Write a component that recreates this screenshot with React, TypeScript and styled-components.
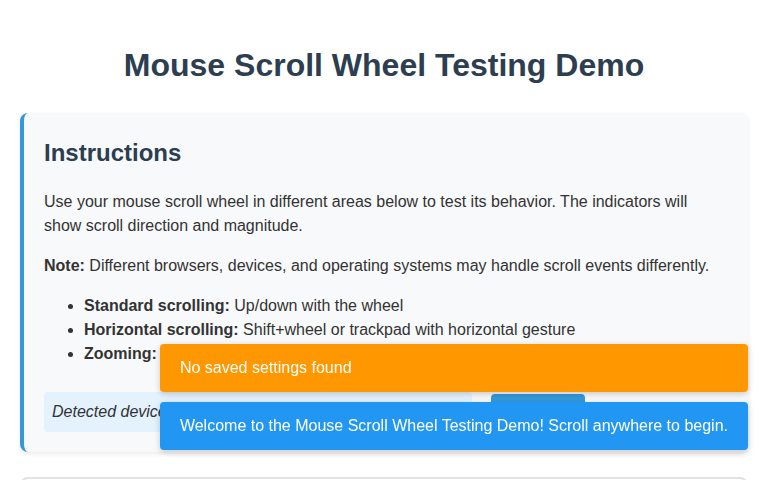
import React from "react";
import styled, { createGlobalStyle } from "styled-components";

const GlobalStyle = createGlobalStyle`
    * {
        box-sizing: border-box;
    }
    body {
        margin: 0;
        font-family: "Liberation Sans", Arial, sans-serif;
        line-height: 1.5;
        color: #333;
        background: #fff;
    }
`;

const Container = styled.div`
    max-width: 1200px;
    margin: 0 auto;
    padding: 20px;
`;

const Title = styled.h1`
    font-size: 32px;
    line-height: 1.2;
    color: #2c3e50;
    text-align: center;
    margin: 26px 0 29px;
`;

const Card = styled.section<{ $accent?: boolean }>`
    background: ${(p) => (p.$accent ? "#f8f9fa" : "#fff")};
    border: ${(p) => (p.$accent ? "none" : "2px solid #e2e2e2")};
    border-left: ${(p) => (p.$accent ? "4px solid #3498db" : "2px solid #e2e2e2")};
    border-radius: 8px;
    padding: 20px;
    margin-bottom: 25px;
    box-shadow: ${(p) => (p.$accent ? "0 2px 5px rgba(0, 0, 0, 0.08)" : "none")};
`;

const CardTitle = styled.h2`
    font-size: 24px;
    line-height: 1.5;
    color: #2c3e50;
    margin: 2px 0 19px;
`;

const Para = styled.p`
    margin: 0 0 16px;
    font-size: 16px;
    max-width: 680px;
`;

const List = styled.ul`
    margin: 0 0 16px;
    padding-left: 40px;
`;

const DeviceRow = styled.div`
    display: flex;
    align-items: center;
    gap: 19px;
    margin-top: 26px;
`;

const DeviceInfo = styled.div`
    width: 428px;
    background: #e3f2fd;
    padding: 8px;
    font-style: italic;
    border-radius: 4px;
    white-space: nowrap;
    overflow: hidden;
`;

const Button = styled.button`
    background: #3498db;
    color: #fff;
    border: none;
    border-radius: 4px;
    padding: 8px 19px;
    font-family: "Liberation Sans", Arial, sans-serif;
    font-size: 14px;
    line-height: 20px;
    cursor: pointer;
`;

const TestArea = styled.div`
    height: 200px;
    background: #fafafa;
    border-radius: 4px;
`;

const ToastStack = styled.div`
    position: fixed;
    right: 20px;
    bottom: 20px;
    display: flex;
    flex-direction: column;
    z-index: 1000;
`;

const Toast = styled.div<{ $kind: "warning" | "info" }>`
    background: ${(p) => (p.$kind === "warning" ? "#ff9800" : "#2196f3")};
    color: #fff;
    padding: 12px 20px;
    font-size: 16px;
    line-height: 24px;
    border-radius: 4px;
    margin-bottom: 10px;
    box-shadow: 0 2px 6px rgba(0, 0, 0, 0.2);
`;

export default function App() {
    return (
        <>
            <GlobalStyle />
            <Container>
                <Title>Mouse Scroll Wheel Testing Demo</Title>
                <Card $accent>
                    <CardTitle>Instructions</CardTitle>
                    <Para>
                        Use your mouse scroll wheel in different areas below to test its behavior. The
                        indicators will show scroll direction and magnitude.
                    </Para>
                    <Para>
                        <strong>Note:</strong> Different browsers, devices, and operating systems may
                        handle scroll events differently.
                    </Para>
                    <List>
                        <li>
                            <strong>Standard scrolling:</strong> Up/down with the wheel
                        </li>
                        <li>
                            <strong>Horizontal scrolling:</strong> Shift+wheel or trackpad with horizontal
                            gesture
                        </li>
                        <li>
                            <strong>Zooming:</strong> Ctrl+wheel (may be blocked by browser)
                        </li>
                    </List>
                    <DeviceRow>
                        <DeviceInfo>Detected device: Mouse wheel (line-based)</DeviceInfo>
                        <Button>Calibrate</Button>
                    </DeviceRow>
                </Card>
                <Card>
                    <CardTitle>Vertical Scroll Test</CardTitle>
                    <TestArea />
                </Card>
            </Container>
            <ToastStack>
                <Toast $kind="warning">No saved settings found</Toast>
                <Toast $kind="info">
                    Welcome to the Mouse Scroll Wheel Testing Demo! Scroll anywhere to begin.
                </Toast>
            </ToastStack>
        </>
    );
}
